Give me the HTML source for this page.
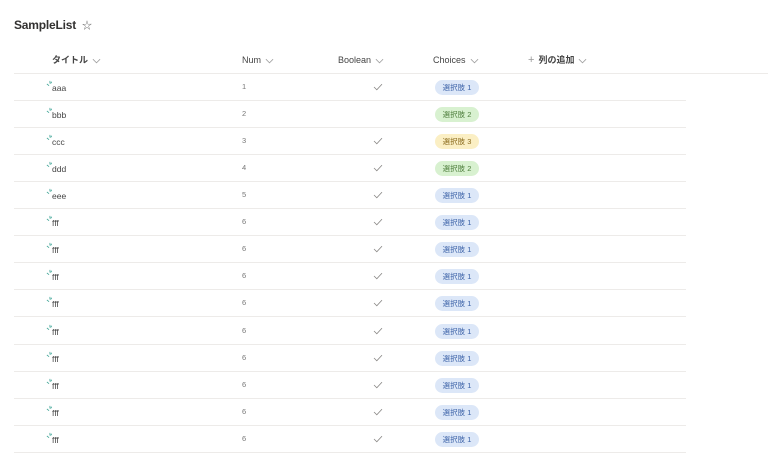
<!DOCTYPE html>
<html><head><meta charset="utf-8"><style>
body{margin:0;background:#fff;font-family:"Liberation Sans","Noto Sans CJK JP",sans-serif;color:#323130;width:768px;height:455px;overflow:hidden;position:relative}
.t{position:absolute;left:14px;top:17px;font-size:12px;font-weight:bold;color:#323130;letter-spacing:-0.2px}
.t span{font-weight:normal;font-size:10px;color:#666;margin-left:6px}
.h{position:absolute;top:54px;font-size:9px;color:#444;line-height:12px}
.h svg{margin-left:4px;vertical-align:middle}
.hl{position:absolute;left:14px;top:73px;width:754px;height:1px;background:#edebe9}
.r{position:absolute;left:14px;width:672px;height:26px;border-bottom:1px solid #edebe9;font-size:8.5px;line-height:26px}
.r .n{position:absolute;left:38px;top:1px;color:#444}
.r .n svg{position:absolute;left:-6px;top:5px}
.r .num{position:absolute;left:228px;top:0;color:#777;font-size:7.5px}
.r .c{position:absolute;left:359px;top:6px}
.p{position:absolute;left:421px;top:6px;width:44px;height:15px;border-radius:8px;font-size:7.5px;line-height:15px;text-align:center}
.b{background:#dce7f8;color:#3d63a8}.g{background:#d8f1d0;color:#4d7d3b}.y{background:#fbefc4;color:#8a6a1c}
</style></head><body>
<svg width="0" height="0" style="position:absolute"><defs>
<symbol id="ch" viewBox="0 0 10 6"><path d="M1 1l4 4 4-4" fill="none" stroke="#a0a0a0" stroke-width="0.9"/></symbol>
<symbol id="ck" viewBox="0 0 12 10"><path d="M1 5l3.5 3.5L11 1.5" fill="none" stroke="#8a8886" stroke-width="1"/></symbol>
<symbol id="sp" viewBox="0 0 8 8"><path d="M1 4.5l2.5 2M4.5 1v3M6.5 2l-1.2 2" stroke="#3aa394" stroke-width="0.9" fill="none"/></symbol>
</defs></svg>
<div class="t">SampleList<span>☆</span></div>
<div class="h" style="left:52px;font-weight:bold">タイトル<svg width="9" height="6"><use href="#ch"/></svg></div>
<div class="h" style="left:242px">Num<svg width="9" height="6"><use href="#ch"/></svg></div>
<div class="h" style="left:338px">Boolean<svg width="9" height="6"><use href="#ch"/></svg></div>
<div class="h" style="left:433px">Choices<svg width="9" height="6"><use href="#ch"/></svg></div>
<div class="h" style="left:528px;font-weight:bold"><span style="font-weight:normal;color:#999;font-size:11px;margin-right:4px">+</span>列の追加<svg width="9" height="6"><use href="#ch"/></svg></div>
<div class="hl"></div>
<div class="r" style="top:74px"><span class="n"><svg width="7" height="7"><use href="#sp"/></svg>aaa</span><span class="num">1</span><svg class="c" width="10" height="8" style="top:9px"><use href="#ck"/></svg><span class="p b">選択肢 1</span></div>
<div class="r" style="top:101px"><span class="n"><svg width="7" height="7"><use href="#sp"/></svg>bbb</span><span class="num">2</span><span class="p g">選択肢 2</span></div>
<div class="r" style="top:128px"><span class="n"><svg width="7" height="7"><use href="#sp"/></svg>ccc</span><span class="num">3</span><svg class="c" width="10" height="8" style="top:9px"><use href="#ck"/></svg><span class="p y">選択肢 3</span></div>
<div class="r" style="top:155px"><span class="n"><svg width="7" height="7"><use href="#sp"/></svg>ddd</span><span class="num">4</span><svg class="c" width="10" height="8" style="top:9px"><use href="#ck"/></svg><span class="p g">選択肢 2</span></div>
<div class="r" style="top:182px"><span class="n"><svg width="7" height="7"><use href="#sp"/></svg>eee</span><span class="num">5</span><svg class="c" width="10" height="8" style="top:9px"><use href="#ck"/></svg><span class="p b">選択肢 1</span></div>
<div class="r" style="top:209px"><span class="n"><svg width="7" height="7"><use href="#sp"/></svg>fff</span><span class="num">6</span><svg class="c" width="10" height="8" style="top:9px"><use href="#ck"/></svg><span class="p b">選択肢 1</span></div>
<div class="r" style="top:236px"><span class="n"><svg width="7" height="7"><use href="#sp"/></svg>fff</span><span class="num">6</span><svg class="c" width="10" height="8" style="top:9px"><use href="#ck"/></svg><span class="p b">選択肢 1</span></div>
<div class="r" style="top:263px"><span class="n"><svg width="7" height="7"><use href="#sp"/></svg>fff</span><span class="num">6</span><svg class="c" width="10" height="8" style="top:9px"><use href="#ck"/></svg><span class="p b">選択肢 1</span></div>
<div class="r" style="top:290px"><span class="n"><svg width="7" height="7"><use href="#sp"/></svg>fff</span><span class="num">6</span><svg class="c" width="10" height="8" style="top:9px"><use href="#ck"/></svg><span class="p b">選択肢 1</span></div>
<div class="r" style="top:318px"><span class="n"><svg width="7" height="7"><use href="#sp"/></svg>fff</span><span class="num">6</span><svg class="c" width="10" height="8" style="top:9px"><use href="#ck"/></svg><span class="p b">選択肢 1</span></div>
<div class="r" style="top:345px"><span class="n"><svg width="7" height="7"><use href="#sp"/></svg>fff</span><span class="num">6</span><svg class="c" width="10" height="8" style="top:9px"><use href="#ck"/></svg><span class="p b">選択肢 1</span></div>
<div class="r" style="top:372px"><span class="n"><svg width="7" height="7"><use href="#sp"/></svg>fff</span><span class="num">6</span><svg class="c" width="10" height="8" style="top:9px"><use href="#ck"/></svg><span class="p b">選択肢 1</span></div>
<div class="r" style="top:399px"><span class="n"><svg width="7" height="7"><use href="#sp"/></svg>fff</span><span class="num">6</span><svg class="c" width="10" height="8" style="top:9px"><use href="#ck"/></svg><span class="p b">選択肢 1</span></div>
<div class="r" style="top:426px"><span class="n"><svg width="7" height="7"><use href="#sp"/></svg>fff</span><span class="num">6</span><svg class="c" width="10" height="8" style="top:9px"><use href="#ck"/></svg><span class="p b">選択肢 1</span></div>
</body></html>
